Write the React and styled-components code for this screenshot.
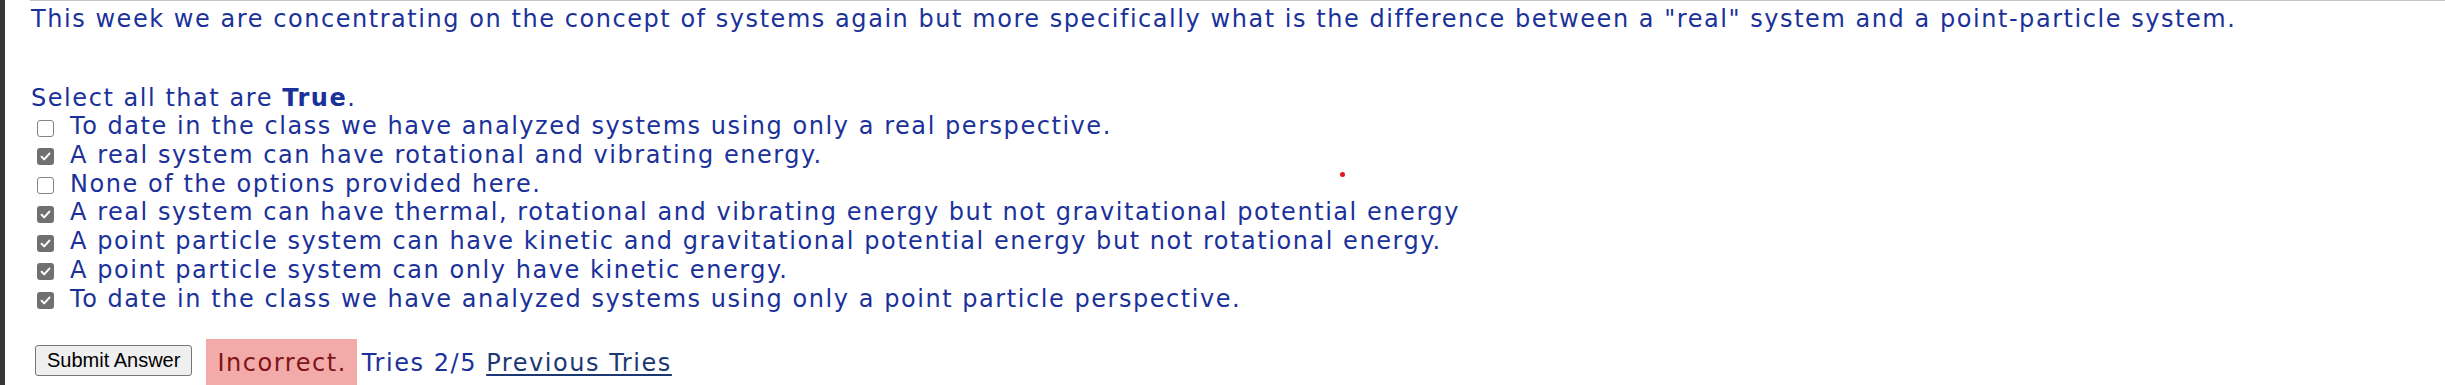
import React from "react";
import styled, { createGlobalStyle } from "styled-components";

const Global = createGlobalStyle`
  html, body { margin: 0; padding: 0; background: #ffffff; overflow: hidden; }
  #root { width: 2445px; height: 385px; }
`;

const Page = styled.div`
  position: relative;
  display: flex;
  width: 2445px;
  height: 385px;
  background: #ffffff;
`;

const EdgeStrip = styled.div`
  width: 5px;
  flex: none;
  background: #363636;
`;

const Main = styled.div`
  flex: 1;
  display: flex;
  flex-direction: column;
  padding-left: 25px;
  font-family: "DejaVu Sans", Verdana, sans-serif;
  font-size: 24px;
  line-height: 28.7px;
  letter-spacing: 1.55px;
  color: #1b319a;
`;

const TopBar = styled.div`
  height: 4px;
  background: #e6e6fa;
  border-bottom: 1px solid #c4c4c4;
`;

const Intro = styled.p`
  margin: 4px 0 0 0;
  padding-left: 1px;
  white-space: nowrap;
`;

const Prompt = styled.div`
  margin-top: 50px;
  padding-left: 1px;
`;

const OptionList = styled.div`
  display: flex;
  flex-direction: column;
`;

const Option = styled.label`
  display: flex;
  align-items: center;
  height: 28.7px;
  white-space: nowrap;
`;

const Box = styled.span`
  flex: none;
  box-sizing: border-box;
  width: 17px;
  height: 17px;
  margin: 3px 16px 0 7px;
  border-radius: 3px;
  display: flex;
  align-items: center;
  justify-content: center;
  background: ${(p) => (p.$checked ? "#707070" : "#ffffff")};
  border: ${(p) => (p.$checked ? "none" : "1.5px solid #858585")};
`;

const Answer = styled.div`
  display: flex;
  align-items: flex-start;
  margin-top: 26px;
`;

const SubmitButton = styled.button`
  flex: none;
  box-sizing: border-box;
  margin: 6px 14px 0 5px;
  height: 31px;
  padding: 0 11px;
  font-family: "Liberation Sans", Arial, sans-serif;
  font-size: 20px;
  letter-spacing: 0;
  color: #000000;
  background: #efefef;
  border: 1px solid #767676;
  border-radius: 3px;
`;

const Status = styled.div`
  display: flex;
  align-items: baseline;
  white-space: pre;
`;

const Verdict = styled.span`
  padding: 10px 10px 12px 11px;
  background: #f3abaa;
  color: #7e1414;
  margin-right: 5px;
`;

const PrevLink = styled.a`
  color: #1c3872;
  text-decoration: underline;
  text-underline-offset: 3px;
`;

const Marker = styled.span`
  position: absolute;
  left: 1340px;
  top: 172px;
  width: 5px;
  height: 5px;
  border-radius: 50%;
  background: #e3161c;
`;

const options = [
  { text: "To date in the class we have analyzed systems using only a real perspective.", checked: false },
  { text: "A real system can have rotational and vibrating energy.", checked: true },
  { text: "None of the options provided here.", checked: false },
  { text: "A real system can have thermal, rotational and vibrating energy but not gravitational potential energy", checked: true },
  { text: "A point particle system can have kinetic and gravitational potential energy but not rotational energy.", checked: true },
  { text: "A point particle system can only have kinetic energy.", checked: true },
  { text: "To date in the class we have analyzed systems using only a point particle perspective.", checked: true },
];

function CheckMark() {
  return (
    <svg width="13" height="13" viewBox="0 0 13 13" aria-hidden="true">
      <path d="M2.6 6.8 L5.2 9.4 L10.4 3.6" fill="none" stroke="#ffffff" strokeWidth="2" strokeLinecap="round" strokeLinejoin="round" />
    </svg>
  );
}

export default function App() {
  return (
    <>
      <Global />
      <Page>
        <EdgeStrip />
        <Main>
          <TopBar />
          <Intro>
            This week we are concentrating on the concept of systems again but more specifically what is the difference between a "real" system and a point-particle system.
          </Intro>
          <Prompt>
            Select all that are <b>True</b>.
          </Prompt>
          <OptionList>
            {options.map((o, i) => (
              <Option key={i}>
                <Box $checked={o.checked}>{o.checked && <CheckMark />}</Box>
                {o.text}
              </Option>
            ))}
          </OptionList>
          <Answer>
            <SubmitButton type="button">Submit Answer</SubmitButton>
            <Status>
              <Verdict>Incorrect.</Verdict>
              {"Tries 2/5 "}
              <PrevLink href="#">Previous Tries</PrevLink>
            </Status>
          </Answer>
        </Main>
        <Marker />
      </Page>
    </>
  );
}
